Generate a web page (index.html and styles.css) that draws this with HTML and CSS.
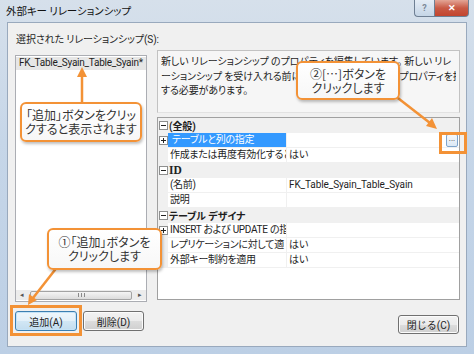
FILE: index.html
```html
<!DOCTYPE html>
<html lang="ja">
<head>
    <meta charset="UTF-8">
    <title>外部キー リレーションシップ</title>
    <link rel="stylesheet" href="styles.css">
</head>
<body>
    <div class="window">
        <div class="titlebar">
            <span class="title">外部キー リレーションシップ</span>
            <div class="caption-btns">
                <span class="cap-help">?</span>
                <span class="cap-close">✕</span>
            </div>
        </div>

        <div class="frame-body">
            <div class="client">
                <div class="left-col">
                    <div class="label">選択された リレーションシップ(S):</div>
                    <div class="listbox">
                        <div class="list-item selected">FK_Table_Syain_Table_Syain*</div>
                        <div class="list-space"></div>
                        <div class="hscroll">
                            <span class="sb-arrow">◂</span>
                            <div class="sb-track">
                                <div class="sb-thumb"><span class="grip"></span></div>
                            </div>
                            <span class="sb-arrow">▸</span>
                        </div>
                    </div>
                    <div class="btn-row">
                        <button class="btn focused add-btn">追加(A)</button>
                        <button class="btn del-btn">削除(D)</button>
                    </div>
                </div>

                <div class="right-col">
                    <div class="desc">
                        <div class="desc-line">新しい リレーションシップ のプロパティを編集しています。 新しい リレ</div>
                        <div class="desc-line">ーションシップ を受け入れる前に、 [テーブルと列の指定] プロパティを指定</div>
                        <div class="desc-line">する必要があります。</div>
                    </div>

                    <div class="grid">
                        <div class="row cat">
                            <span class="gutter"><svg class="exp" width="9" height="9" viewBox="0 0 9 9"><rect x="0.5" y="0.5" width="8" height="8" fill="#fff" stroke="#8e8f8f"/><path d="M2 4.5H7" stroke="#222"/></svg></span>
                            <span class="cat-name">(全般)</span>
                        </div>
                        <div class="row">
                            <span class="gutter"><svg class="exp" width="9" height="9" viewBox="0 0 9 9"><rect x="0.5" y="0.5" width="8" height="8" fill="#fff" stroke="#8e8f8f"/><path d="M2 4.5H7M4.5 2V7" stroke="#222"/></svg></span>
                            <span class="name sel">テーブルと列の指定</span>
                            <span class="value"><span class="dots-btn">...</span></span>
                        </div>
                        <div class="row">
                            <span class="gutter"></span>
                            <span class="name">作成または再度有効化するとき</span>
                            <span class="value">はい</span>
                        </div>
                        <div class="row cat">
                            <span class="gutter"><svg class="exp" width="9" height="9" viewBox="0 0 9 9"><rect x="0.5" y="0.5" width="8" height="8" fill="#fff" stroke="#8e8f8f"/><path d="M2 4.5H7" stroke="#222"/></svg></span>
                            <span class="cat-name serif">ID</span>
                        </div>
                        <div class="row">
                            <span class="gutter"></span>
                            <span class="name">(名前)</span>
                            <span class="value">FK_Table_Syain_Table_Syain</span>
                        </div>
                        <div class="row">
                            <span class="gutter"></span>
                            <span class="name">説明</span>
                            <span class="value"></span>
                        </div>
                        <div class="row cat">
                            <span class="gutter"><svg class="exp" width="9" height="9" viewBox="0 0 9 9"><rect x="0.5" y="0.5" width="8" height="8" fill="#fff" stroke="#8e8f8f"/><path d="M2 4.5H7" stroke="#222"/></svg></span>
                            <span class="cat-name">テーブル デザイナ</span>
                        </div>
                        <div class="row">
                            <span class="gutter"><svg class="exp" width="9" height="9" viewBox="0 0 9 9"><rect x="0.5" y="0.5" width="8" height="8" fill="#fff" stroke="#8e8f8f"/><path d="M2 4.5H7M4.5 2V7" stroke="#222"/></svg></span>
                            <span class="name">INSERT および UPDATE の指</span>
                            <span class="value"></span>
                        </div>
                        <div class="row">
                            <span class="gutter"></span>
                            <span class="name">レプリケーションに対して適</span>
                            <span class="value">はい</span>
                        </div>
                        <div class="row">
                            <span class="gutter"></span>
                            <span class="name">外部キー制約を適用</span>
                            <span class="value">はい</span>
                        </div>
                    </div>

                    <div class="btn-row end">
                        <button class="btn close-btn">閉じる(C)</button>
                    </div>
                </div>
            </div>
        </div>

        <!-- annotations drawn over the dialog -->
        <svg class="arrows" width="474" height="354" viewBox="0 0 474 354">
            <path d="M82 102V75" stroke="#f39236" stroke-width="2.5"/>
            <polygon points="82,67 77,77 87,77" fill="#f39236"/>
            <path d="M394 95L430 123" stroke="#f39236" stroke-width="2.5"/>
            <polygon points="437,129 426,126 432,118" fill="#f39236"/>
            <path d="M58 266L33 298" stroke="#f39236" stroke-width="2.5"/>
            <polygon points="28,305 29,294 37,300" fill="#f39236"/>
        </svg>
        <div class="hl hl-add"></div>
        <div class="hl hl-dots"></div>
        <div class="callout c-list">「追加」ボタンをクリッ<br>クすると表示されます</div>
        <div class="callout c-dots">②[…]ボタンを<br>クリックします</div>
        <div class="callout c-add">①「追加」ボタンを<br>クリックします</div>
    </div>
</body>
</html>
```

FILE: styles.css
```css
body {
    margin: 0;
    font-family: Roboto, "Noto Sans CJK JP", sans-serif;
    font-size: 10px;
    letter-spacing: -0.1px;
    font-feature-settings: "palt";
    color: #1e1e1e;
}
.window {
    position: relative;
    width: 474px;
    height: 354px;
    display: flex;
    flex-direction: column;
    background: linear-gradient(to bottom, #d6e0eb, #c6d6e8 40%, #bccfe5);
    overflow: hidden;
}
.titlebar {
    height: 22px;
    display: flex;
    align-items: flex-start;
    padding: 0 5px 0 6px;
}
.title {
    margin-top: 3px;
    font-size: 10.5px;
    color: #111;
}
.caption-btns {
    margin-left: auto;
    display: flex;
}
.cap-help, .cap-close {
    height: 16px;
    display: flex;
    align-items: center;
    justify-content: center;
    border: 1px solid #6e7f93;
    border-top: none;
    font-size: 9px;
    font-weight: bold;
    letter-spacing: 0;
}
.cap-help {
    width: 19px;
    border-radius: 0 0 0 4px;
    border-right: none;
    background: linear-gradient(#e4ecf5, #c5d5e6);
    color: #7d8a99;
}
.cap-close {
    width: 33px;
    border-radius: 0 0 4px 0;
    background: linear-gradient(#e3a596, #c95a45 50%, #c2442e);
    color: #fff;
}
.frame-body {
    flex: 1;
    padding: 0 7px 7px;
    display: flex;
}
.client {
    flex: 1;
    display: flex;
    gap: 10px;
    padding: 0 6px 0 7px;
    background-color: #f0f0f0;
    border: 1px solid #99a9bd;
}
.left-col {
    width: 132px;
    padding-top: 10px;
    display: flex;
    flex-direction: column;
}
.label {
    height: 22px;
    line-height: 14px;
    white-space: nowrap;
    margin-left: 1px;
}
.listbox {
    height: 247px;
    box-sizing: border-box;
    border: 1px solid #abadb3;
    background-color: white;
    display: flex;
    flex-direction: column;
}
.list-item {
    height: 13px;
    line-height: 12px;
    margin-top: 1px;
    padding-left: 3px;
    letter-spacing: -0.25px;
    white-space: nowrap;
    overflow: hidden;
}
.list-item.selected {
    background-color: #e6e6e6;
}
.list-space {
    flex: 1;
}
.hscroll {
    height: 10px;
    display: flex;
    align-items: center;
    background: #ececec;
    margin-bottom: 1px;
}
.sb-arrow {
    width: 12px;
    text-align: center;
    font-size: 7px;
    color: #555;
}
.sb-track {
    flex: 1;
    height: 9px;
    display: flex;
}
.sb-thumb {
    flex: 1;
    margin: 0 2px;
    border: 1px solid #a3a3a3;
    border-radius: 2px;
    background: linear-gradient(#f4f4f4, #dcdcdc);
    display: flex;
    justify-content: center;
    align-items: center;
}
.grip {
    width: 5px;
    height: 4px;
    border-left: 1px solid #8a8a8a;
    border-right: 1px solid #8a8a8a;
    background: linear-gradient(to right, transparent 2px, #8a8a8a 2px, #8a8a8a 3px, transparent 3px);
}
.btn-row {
    display: flex;
    gap: 6px;
    margin-top: 9px;
}
.btn-row.end {
    justify-content: flex-end;
    margin-top: 15px;
    margin-right: 1px;
}
.btn {
    height: 20px;
    padding: 0;
    font-family: inherit;
    font-size: 10px;
    color: #222;
    border: 1px solid #707070;
    border-radius: 3px;
    background: linear-gradient(#f2f2f2, #ebebeb 50%, #dddddd 50%, #cfcfcf);
    box-shadow: inset 0 0 0 1px #fbfbfb;
}
.btn.focused {
    border-color: #3c7fb1;
    background: linear-gradient(#eef6fb, #e3f0f9 50%, #d2e7f5 50%, #c3ddef);
    box-shadow: inset 0 0 0 1px #c5e3f7;
}
.add-btn {
    width: 62px;
}
.del-btn {
    width: 61px;
}
.close-btn {
    width: 61px;
    height: 19px;
}
.right-col {
    width: 303px;
    padding-top: 27px;
    display: flex;
    flex-direction: column;
}
.desc {
    height: 63px;
    box-sizing: border-box;
    border: 1px solid #c2c2c2;
    border-bottom-color: #e2e2e2;
    background-color: #f6f6f6;
    padding: 4px 3px 0;
    margin-bottom: 4px;
}
.desc-line {
    height: 14.5px;
    line-height: 14.5px;
    white-space: nowrap;
    overflow: hidden;
}
.grid {
    height: 183px;
    box-sizing: border-box;
    border: 1px solid #a0a0a0;
    background-color: white;
}
.row {
    height: 15px;
    display: flex;
    align-items: center;
    border-bottom: 1px solid #f0f0f0;
    box-sizing: border-box;
}
.row.cat {
    background-color: #f0f0f0;
}
.gutter {
    width: 10px;
    height: 100%;
    flex-shrink: 0;
    background-color: #f0f0f0;
    display: flex;
    align-items: center;
}
.exp {
    margin-left: 1px;
}
.cat-name {
    font-weight: bold;
    padding-left: 1px;
}
.cat-name.serif {
    font-family: "Liberation Serif", serif;
    font-size: 11.5px;
    letter-spacing: 0;
}
.name {
    width: 119px;
    height: 100%;
    flex-shrink: 0;
    box-sizing: border-box;
    padding-left: 2px;
    line-height: 14px;
    letter-spacing: -0.3px;
    white-space: nowrap;
    overflow: hidden;
    border-right: 1px solid #f0f0f0;
}
.name.sel {
    background-color: #3399ff;
    color: white;
    padding-left: 4px;
}
.value {
    flex: 1;
    height: 100%;
    padding-left: 2px;
    line-height: 14px;
    white-space: nowrap;
    overflow: hidden;
    display: flex;
}
.dots-btn {
    width: 10px;
    height: 11px;
    margin: 1px 1px 0 auto;
    border: 1px solid #7ea4cc;
    border-radius: 2px;
    background: linear-gradient(#f4f8fc, #dce8f4);
    font-size: 8px;
    line-height: 8px;
    letter-spacing: 0;
    text-align: center;
    color: #333;
}
.arrows {
    position: absolute;
    left: 0;
    top: 0;
    pointer-events: none;
}
.hl {
    position: absolute;
    border: 3px solid #f39236;
    box-sizing: border-box;
}
.hl-add {
    left: 10px;
    top: 305px;
    width: 72px;
    height: 31px;
}
.hl-dots {
    left: 439px;
    top: 132px;
    width: 28px;
    height: 22px;
}
.callout {
    position: absolute;
    box-sizing: border-box;
    border: 2.5px solid #f39236;
    border-radius: 6px;
    background: linear-gradient(#ffffff, #f7f7f7);
    box-shadow: 1px 2px 3px rgba(0,0,0,0.25);
    font-family: "Noto Sans CJK JP", sans-serif;
    font-size: 12px;
    line-height: 14px;
    letter-spacing: 0;
    color: #333;
    text-align: center;
    display: flex;
    align-items: center;
    justify-content: center;
}
.c-list {
    left: 20px;
    top: 102px;
    width: 122px;
    height: 40px;
}
.c-dots {
    left: 296px;
    top: 61px;
    width: 104px;
    height: 39px;
}
.c-add {
    left: 47px;
    top: 228px;
    width: 115px;
    height: 42px;
}
```
